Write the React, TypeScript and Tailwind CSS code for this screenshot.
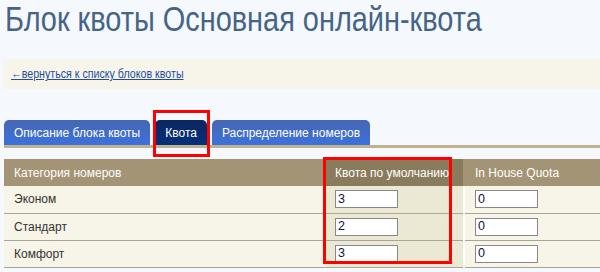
import React from "react";

const rows = [
  { name: "Эконом", quota: "3", house: "0" },
  { name: "Стандарт", quota: "2", house: "0" },
  { name: "Комфорт", quota: "3", house: "0" },
];

const tabs = [
  { label: "Описание блока квоты", active: false },
  { label: "Квота", active: true },
  { label: "Распределение номеров", active: false },
];

export default function App() {
  return (
    <div className="relative w-[600px] h-[272px] overflow-hidden bg-[#f5f9fd] font-['Liberation_Sans',Arial,sans-serif]">
      {/* узкий шрифт не установлен — сжимаем обычный */}
      <h1 className="pl-[5px] pt-px text-[35px] leading-none text-[#466487] whitespace-nowrap">
        <span className="inline-block origin-left scale-x-[0.826]">Блок квоты Основная онлайн-квота</span>
      </h1>

      <div className="ml-[3px] mt-[23px] h-[30px] flex items-center bg-[#f7f5ea] pl-[8px]">
        <a href="#" className="inline-block origin-left scale-x-[0.82] text-[13px] text-[#1f4ea1] underline whitespace-nowrap">
          ←вернуться к списку блоков квоты
        </a>
      </div>

      {/* вкладки */}
      <div className="ml-[4px] mt-[31px] flex items-end gap-[5px] border-b-[3px] border-[#bfb38f]">
        {tabs.map((t) => (
          <div
            key={t.label}
            className={
              t.active
                ? "h-[25px] px-[10px] flex items-center rounded-t-[5px] bg-gradient-to-b from-[#0a2660] to-[#04307a] text-white text-[12px]"
                : "h-[25px] px-[10px] flex items-center rounded-t-[5px] bg-gradient-to-b from-[#4666b2] to-[#3b71dc] text-white text-[12px]"
            }
          >
            {t.label}
          </div>
        ))}
      </div>

      <table className="ml-[4px] mt-[11px] w-[600px] border-collapse text-[12px]">
        <thead>
          <tr className="h-[27px] text-white">
            <th className="w-[322px] bg-[#a39476] text-left font-normal pl-[10px]">Категория номеров</th>
            <th className="w-[138px] bg-[#8a7b5c] text-left font-normal pl-[9px]">Квота по умолчанию</th>
            <th className="bg-[#a39476] text-left font-normal pl-[10px] border-l-2 border-[#a39476]">In House Quota</th>
          </tr>
        </thead>
        <tbody>
          {rows.map((r) => (
            <tr key={r.name} className="h-[27px] border-b border-[#a9a59a]">
              <td className="bg-[#f7f4e8] pl-[10px] text-[#333]">{r.name}</td>
              <td className="bg-[#ebe8d3] pl-[9px]">
                <input
                  defaultValue={r.quota}
                  className="block w-[63px] h-[18px] border border-[#888] bg-white px-[2px] text-[12.5px] text-[#101048] outline-none"
                />
              </td>
              <td className="bg-[#f7f4e8] pl-[10px] border-l-2 border-white">
                <input
                  defaultValue={r.house}
                  className="block w-[63px] h-[18px] border border-[#888] bg-white px-[2px] text-[12.5px] text-[#101048] outline-none"
                />
              </td>
            </tr>
          ))}
        </tbody>
      </table>

      {/* пометки красным */}
      <div className="absolute left-[153px] top-[110px] w-[57px] h-[47px] border-[3px] border-[#ff0000] pointer-events-none" />
      <div className="absolute left-[323px] top-[157px] w-[129px] h-[107px] border-[3px] border-[#ff0000] pointer-events-none" />
    </div>
  );
}
